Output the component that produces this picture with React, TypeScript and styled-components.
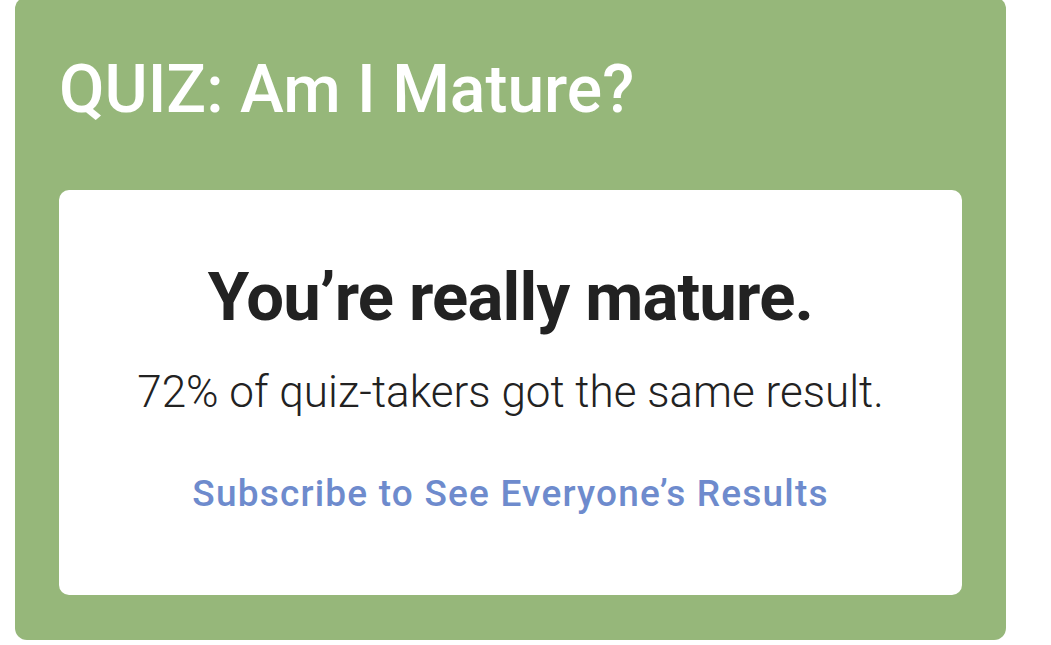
import React from "react";
import styled, { createGlobalStyle } from "styled-components";

const GlobalStyle = createGlobalStyle`
  html, body { margin: 0; padding: 0; background: #ffffff; }
  body { font-family: Roboto, "Noto Sans", Arial, sans-serif; }
`;

const Page = styled.div`
  width: 1051px;
  height: 645px;
  overflow: hidden;
  background: #ffffff;
`;

const Card = styled.section`
  box-sizing: border-box;
  width: 991px;
  margin: -3px 0 0 15px;
  padding: 0 44px 45px 44px;
  background: #96b77a;
  border-radius: 12px;
  display: flex;
  flex-direction: column;
`;

const Title = styled.h1`
  margin: 0;
  padding-top: 53px;
  height: 193px;
  box-sizing: border-box;
  font-family: Roboto, Arial, sans-serif;
  font-weight: 500;
  font-size: 66px;
  line-height: 80px;
  color: #ffffff;
`;

const ResultBox = styled.div`
  background: #ffffff;
  border-radius: 10px;
  height: 405px;
  display: flex;
  flex-direction: column;
  align-items: center;
  text-align: center;
  padding-top: 67px;
  box-sizing: border-box;
`;

const Heading = styled.h2`
  margin: 0;
  font-family: Roboto, Arial, sans-serif;
  font-weight: 700;
  font-size: 67px;
  line-height: 80px;
  letter-spacing: -0.8px;
  color: #222222;
`;

const Stat = styled.p`
  margin: 29px 0 0 0;
  font-family: Roboto, Arial, sans-serif;
  font-weight: 300;
  font-size: 44px;
  line-height: 52px;
  color: #222222;
`;

const SubscribeLink = styled.a`
  margin-top: 54px;
  font-family: Roboto, Arial, sans-serif;
  font-weight: 500;
  font-size: 37px;
  line-height: 44px;
  letter-spacing: 1.2px;
  color: #6e8bcd;
  text-decoration: none;
  cursor: pointer;
`;

export default function App() {
  return (
    <Page>
      <GlobalStyle />
      <Card>
        <Title>QUIZ: Am I Mature?</Title>
        <ResultBox>
          <Heading>You’re really mature.</Heading>
          <Stat>72% of quiz-takers got the same result.</Stat>
          <SubscribeLink>Subscribe to See Everyone’s Results</SubscribeLink>
        </ResultBox>
      </Card>
    </Page>
  );
}
